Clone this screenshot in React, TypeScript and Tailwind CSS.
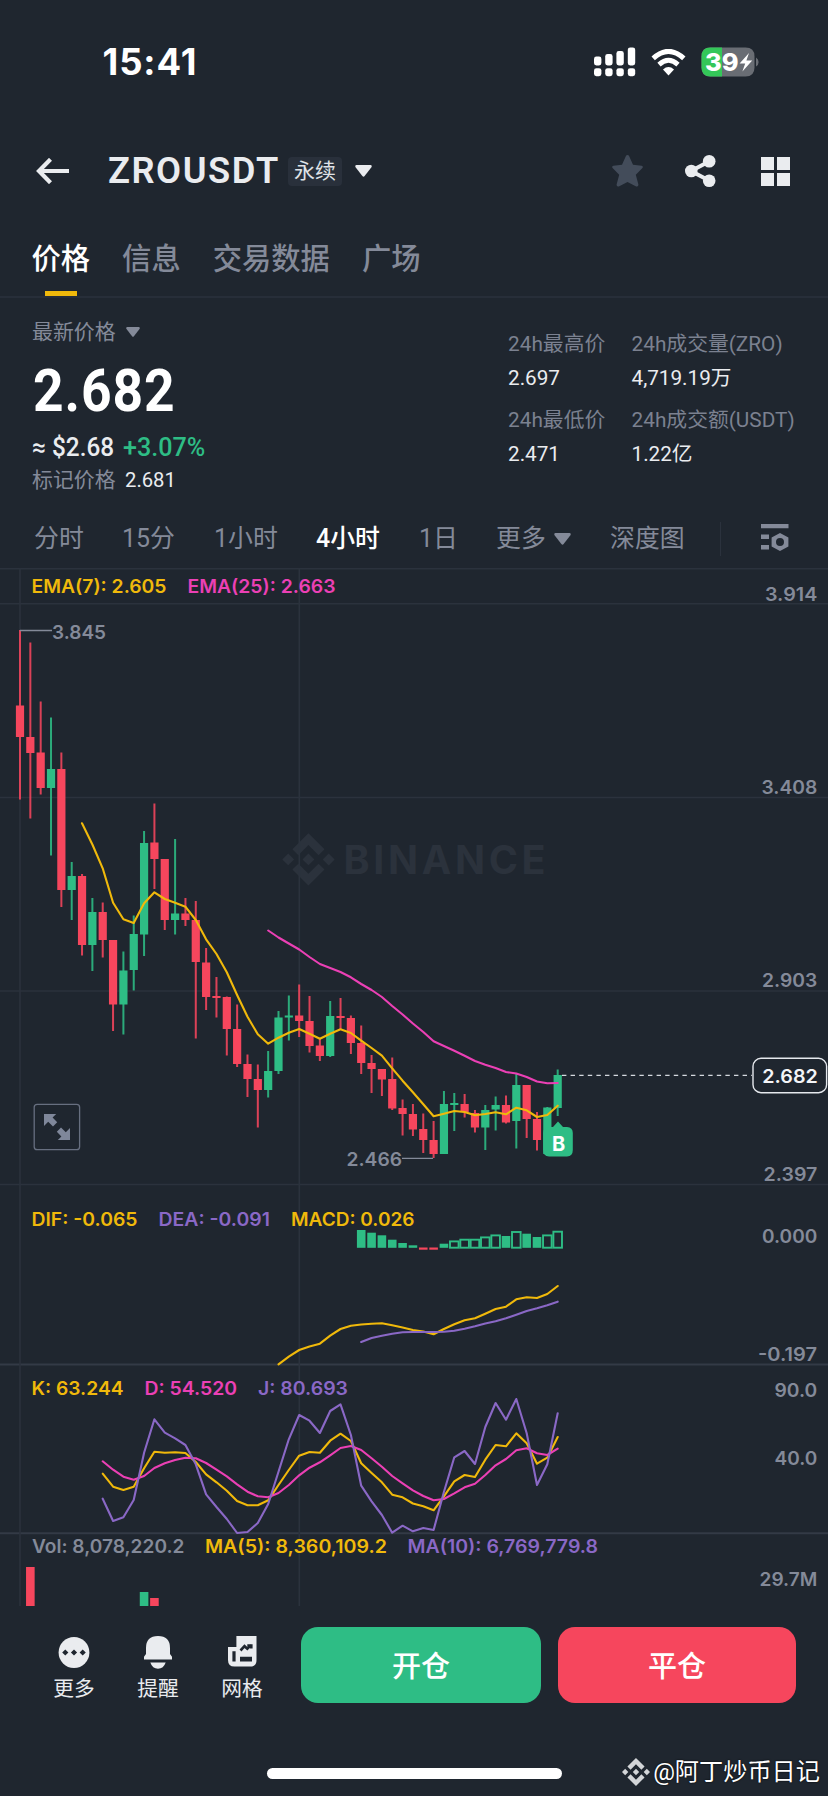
import React from "react";

const GREEN = "#2ebd85";
const RED = "#f6465d";
const YELLOW = "#f0b90b";
const PINK = "#eb40b5";
const PURPLE = "#8a68c6";
const GRAY = "#848a99";
const GRID = "#2b323d";

const BINANCE =
  "M16.624 13.9202l2.7175 2.7154-7.353 7.353-7.353-7.352 2.7175-2.7164 4.6355 4.6595 4.6356-4.6595zm4.6366-4.6366L24 12l-2.7154 2.7164L18.5682 12l2.6924-2.7164zm-9.272.001l2.7163 2.6914-2.7164 2.7174v-.001L9.2721 12l2.7164-2.7154zm-9.2722-.001L5.4088 12l-2.6914 2.6924L0 12l2.7164-2.7164zM11.9885.0115l7.353 7.329-2.7174 2.7154-4.6356-4.6356-4.6355 4.6595-2.7174-2.7154 7.353-7.353z";

const xAt = (i: number) => 20 + 10.34 * i;

type Candle = [up: 0 | 1, high: number, low: number, top: number, bottom: number];

const candles: Candle[] = [
  [0, 630, 799.5, 705.5, 737],
  [0, 642.5, 818.5, 737, 753],
  [0, 701.5, 794.5, 752.5, 788],
  [1, 717.5, 855.5, 769, 788],
  [0, 752.5, 907, 769, 890],
  [1, 862, 920, 876, 890],
  [0, 874, 955.5, 876, 945],
  [1, 898, 971, 912, 945],
  [0, 902.5, 957.5, 912, 940],
  [0, 940, 1031, 940, 1004.5],
  [1, 951.5, 1034.5, 970.5, 1004.5],
  [1, 915.5, 990.5, 934, 970],
  [1, 831, 956, 843, 934.5],
  [0, 803.5, 889, 842.5, 859],
  [0, 859, 930, 859, 920],
  [1, 839, 934.5, 913.5, 920],
  [0, 898, 926, 913.5, 920],
  [0, 901, 1038.5, 920, 962],
  [0, 948, 1010, 962.5, 997],
  [0, 977, 1017.5, 996, 998],
  [0, 996.5, 1055.5, 997, 1029],
  [0, 1004.5, 1067, 1029, 1064],
  [0, 1054.5, 1097, 1064, 1079],
  [0, 1064.5, 1127.5, 1079, 1090],
  [1, 1051, 1097.5, 1071, 1090],
  [1, 1011, 1074, 1017.5, 1071],
  [1, 995.5, 1040.5, 1015.5, 1017.5],
  [0, 984.5, 1037, 1015.5, 1021],
  [0, 996, 1052.5, 1021, 1046],
  [0, 1039, 1061, 1045.5, 1056],
  [1, 1001, 1057, 1016, 1056],
  [0, 998, 1029, 1016, 1018],
  [0, 1015.5, 1054, 1018, 1043],
  [0, 1025.5, 1074, 1043, 1063],
  [0, 1055, 1093, 1063, 1069],
  [0, 1069, 1096, 1069, 1079.5],
  [0, 1057.5, 1110, 1079, 1108.5],
  [0, 1099.5, 1135.5, 1108, 1114],
  [0, 1104, 1136, 1114, 1129.5],
  [0, 1113.5, 1153, 1129, 1140],
  [0, 1121, 1158, 1140, 1154],
  [1, 1091, 1154, 1104, 1154],
  [1, 1093, 1131, 1103, 1105],
  [0, 1094, 1117.5, 1104, 1112],
  [0, 1110, 1132.5, 1113, 1127.5],
  [1, 1105, 1150, 1110, 1127.5],
  [1, 1096.5, 1130.5, 1105, 1109.5],
  [0, 1095.5, 1123.5, 1105, 1122.5],
  [1, 1073.5, 1148.5, 1085, 1121],
  [0, 1085, 1138, 1085, 1119],
  [0, 1112, 1150.5, 1119, 1140],
  [1, 1107, 1156, 1107.5, 1154],
  [1, 1069.5, 1116, 1075, 1108],
];

const ema7 = [
  823.3, 844.5, 868.3, 902.7, 919.3, 923, 903.3, 892.3, 899, 902.7, 906.7, 920, 939.3, 954, 972.3, 995, 1016.7,
  1034.3, 1043.7, 1037.7, 1032.7, 1029, 1033.7, 1038.7, 1033.7, 1029.3, 1033, 1040.7, 1048, 1055.7, 1068.3,
  1080.7, 1092.3, 1104.3, 1116.3, 1113.7, 1111, 1112, 1115.3, 1114, 1112.3, 1114.3, 1107.7, 1110.3, 1117, 1115,
  1105.7,
];
const ema25 = [
  930.5, 937.5, 943.5, 949.5, 957, 964, 968, 972, 977.3, 984, 990, 997, 1006, 1014.5, 1023.5, 1032, 1041.3, 1046,
  1050.7, 1055.7, 1061, 1064.7, 1068, 1072, 1073.5, 1077, 1081.5, 1083.3, 1083,
];
const dif = [
  1364.3, 1356.7, 1350, 1346.5, 1343.7, 1335.7, 1329, 1325.7, 1324.5, 1323.7, 1323.3, 1325.3, 1327.5, 1330,
  1331.5, 1334.3, 1329, 1324.3, 1320.3, 1318.3, 1313.7, 1309, 1306.7, 1299.3, 1297.3, 1298, 1294, 1286,
];
const dea = [
  1342, 1338, 1335.7, 1333.7, 1332.3, 1332, 1332, 1332, 1331.7, 1330.7, 1328.7, 1326.3, 1323.5, 1321.3, 1318.3,
  1314.7, 1311, 1308.3, 1305.3, 1301.7,
];
const kLine = [
  1473.7, 1486.7, 1490, 1486.7, 1468.3, 1451.7, 1452.7, 1452.3, 1453, 1462, 1474.3, 1482.3, 1490.7, 1501, 1505.3,
  1505.3, 1500.3, 1485, 1470, 1455.7, 1452, 1452.7, 1440.7, 1433.7, 1441, 1463.3, 1473, 1482.3, 1494.7, 1497.3,
  1503.5, 1506.3, 1510.3, 1496.3, 1481.3, 1475, 1477, 1459.7, 1445, 1446.3, 1433.3, 1443.3, 1463.7, 1457.7, 1437,
];
const dLine = [
  1461.3, 1469.7, 1476.7, 1479.7, 1476, 1468, 1463.3, 1460, 1457.7, 1458.3, 1463, 1469.7, 1476.3, 1484.3, 1491.7,
  1496.3, 1497.3, 1493, 1485, 1475.3, 1467.7, 1462.3, 1455.3, 1448, 1446, 1450, 1458.3, 1466.7, 1476, 1483.3,
  1490.3, 1496, 1500.3, 1499, 1493.3, 1487.3, 1483.7, 1475, 1465.3, 1459, 1450.3, 1448.3, 1453.3, 1455, 1448.7,
];
const jLine = [
  1498.7, 1521, 1517.3, 1500, 1452.7, 1419.3, 1432.7, 1438.3, 1445, 1464.3, 1494.3, 1507, 1519, 1533, 1532, 1523,
  1504, 1471.7, 1439.3, 1415, 1420.7, 1433, 1411, 1404.3, 1435, 1485.7, 1501.3, 1515, 1532.7, 1525.7, 1531.3,
  1528, 1530, 1492, 1457.3, 1451, 1464, 1427, 1403, 1419.7, 1399, 1433.3, 1485, 1464.3, 1413.3,
];

type Bar = [top: number, kind: "solid" | "hollow" | "neg"];
const macd: Bar[] = [
  [1230, "solid"], [1232.7, "solid"], [1235.3, "solid"], [1239.7, "solid"], [1243, "solid"], [1245.3, "solid"],
  [1247.5, "neg"], [1247.5, "neg"],
  [1243.7, "solid"], [1240.7, "hollow"], [1239, "hollow"], [1239, "hollow"], [1236.7, "hollow"],
  [1234.7, "hollow"], [1236, "solid"], [1231.3, "hollow"], [1233.7, "solid"], [1237, "solid"],
  [1234.7, "hollow"], [1231, "hollow"],
];

function Line({ start, ys, color }: { start: number; ys: number[]; color: string }) {
  const pts = ys.map((y, k) => `${xAt(start + k).toFixed(1)},${y}`).join(" ");
  return <polyline points={pts} fill="none" stroke={color} strokeWidth={2.1} strokeLinejoin="round" strokeLinecap="round" />;
}

function Label({ x1, x2, y, color = GRAY, children, weight = 560 }: {
  x1: number; x2: number; y: number; color?: string; children: string; weight?: number;
}) {
  return (
    <text x={x1} y={y + 0.4} fill={color} fontSize={18.6} fontWeight={weight} textLength={x2 - x1} lengthAdjust="spacingAndGlyphs">
      {children}
    </text>
  );
}

function Chart() {
  return (
    <svg className="block h-[1040px] w-[828px] shrink-0 font-['Inter',sans-serif]" viewBox="0 568 828 1040">
      <g fill="#2b323c">
        <g transform="translate(282.3 833.3) scale(2.18)"><path d={BINANCE} /></g>
        <text x={343.5} y={873.9} fontSize={39.5} fontWeight={700} textLength={202} lengthAdjust="spacing">BINANCE</text>
      </g>
      <g stroke={GRID} strokeWidth={1.6}>
        {[568.8, 603.7, 797.5, 991, 1184.5].map((y) => <line key={y} x1={0} x2={828} y1={y} y2={y} />)}
        {[1364.5, 1533.3].map((y) => <line key={y} x1={0} x2={828} y1={y} y2={y} stroke="#333a46" strokeWidth={2} />)}
        <line x1={20} x2={20} y1={568} y2={1606} />
        <line x1={299.3} x2={299.3} y1={568} y2={1606} />
      </g>

      <line x1={562} x2={752} y1={1075.4} y2={1075.4} stroke="#d5d9df" strokeWidth={1.2} strokeDasharray="4.4 4.2" />

      {candles.map(([up, high, low, top, bottom], i) => {
        const c = up ? GREEN : RED;
        return (
          <g key={i} fill={c}>
            <rect x={xAt(i) - 1} y={high} width={2} height={low - high} opacity={0.88} />
            <rect x={xAt(i) - 4.1} y={top} width={8.2} height={bottom - top} />
          </g>
        );
      })}
      <Line start={24} ys={ema25} color={PINK} />
      <Line start={6} ys={ema7} color={YELLOW} />

      <path d="M553 1127 L558 1121.5 L563 1127 H567 Q572.8 1127.5 572.8 1133 V1150 Q572.8 1156.4 567 1156.4 H549 Q543.2 1156.4 543.2 1150 V1133 Q543.2 1127 549 1127 Z" fill={GREEN} />
      <text x={552} y={1150.6} fontSize={20} fontWeight={700} fill="#fff">B</text>

      <path d="M20 630.5H52M402 1158.3H433" stroke={GRAY} strokeWidth={1.3} />
      <Label x1={52} x2={106} y={638.4}>3.845</Label>
      <Label x1={346.5} x2={402} y={1166}>2.466</Label>

      <Label x1={31.5} x2={166.5} y={592.3} color={YELLOW}>EMA(7): 2.605</Label>
      <Label x1={187.5} x2={335.5} y={592.3} color={PINK}>EMA(25): 2.663</Label>
      <Label x1={31.5} x2={137.5} y={1225.6} color={YELLOW}>DIF: -0.065</Label>
      <Label x1={158.5} x2={270} y={1225.6} color={PURPLE}>DEA: -0.091</Label>
      <Label x1={291} x2={414.5} y={1225.6} color={YELLOW}>MACD: 0.026</Label>
      <Label x1={31.5} x2={123.5} y={1394.3} color={YELLOW}>K: 63.244</Label>
      <Label x1={144.5} x2={237} y={1394.3} color={PINK}>D: 54.520</Label>
      <Label x1={258} x2={348} y={1394.3} color={PURPLE}>J: 80.693</Label>
      <Label x1={32} x2={184.5} y={1552.3}>Vol: 8,078,220.2</Label>
      <Label x1={205} x2={387} y={1552.3} color={YELLOW}>MA(5): 8,360,109.2</Label>
      <Label x1={407.5} x2={598} y={1552.3} color={PURPLE}>MA(10): 6,769,779.8</Label>

      <Label x1={765} x2={817.3} y={600.4}>3.914</Label>
      <Label x1={761.5} x2={817.3} y={793.5}>3.408</Label>
      <Label x1={762} x2={817.3} y={987}>2.903</Label>
      <Label x1={763.5} x2={817.3} y={1180.3}>2.397</Label>
      <Label x1={762} x2={817.3} y={1243}>0.000</Label>
      <Label x1={758} x2={817} y={1360.5}>-0.197</Label>
      <Label x1={774.5} x2={817.3} y={1396.3}>90.0</Label>
      <Label x1={774.5} x2={817.3} y={1464.3}>40.0</Label>
      <Label x1={759.5} x2={817.3} y={1586}>29.7M</Label>

      <rect x={753} y={1058.3} width={73.6} height={34.4} rx={8} fill="#1f262f" stroke="#e6e9ee" strokeWidth={1.4} />
      <Label x1={762.3} x2={817.8} y={1082.8} color="#f4f5f7" weight={620}>2.682</Label>

      {macd.map(([top, kind], k) => {
        const x = xAt(33 + k);
        if (kind === "neg") return <rect key={k} x={x - 4.3} y={top} width={8.6} height={2.2} fill={RED} />;
        if (kind === "solid") return <rect key={k} x={x - 4.3} y={top} width={8.6} height={1247.8 - top} fill={GREEN} />;
        return <rect key={k} x={x - 4.3} y={top + 0.7} width={8.6} height={1247 - top} fill="none" stroke={GREEN} strokeWidth={1.9} />;
      })}
      <Line start={25} ys={dif} color={YELLOW} />
      <Line start={33} ys={dea} color={PURPLE} />
      <Line start={8} ys={kLine} color={YELLOW} />
      <Line start={8} ys={dLine} color={PINK} />
      <Line start={8} ys={jLine} color={PURPLE} />

      <rect x={xAt(1) - 4.3} y={1567} width={8.6} height={39} fill={RED} />
      <rect x={xAt(12) - 4.3} y={1592} width={8.6} height={14} fill={GREEN} />
      <rect x={xAt(13) - 4.3} y={1598} width={8.6} height={8} fill={RED} />

      <rect x={34.2} y={1104.3} width={45.4} height={45.4} rx={3} fill="#1f262f" stroke="#676f80" strokeWidth={1.3} />
      <g fill="#7f879a">
        <path d="M44 1114H56.2L52.6 1117.6L57.2 1122.2L53 1126.4L48.2 1121.8L44 1126Z" />
        <path d="M70 1140H57.8L61.4 1136.4L56.8 1131.8L61 1127.6L65.8 1132.2L70 1128Z" />
      </g>
    </svg>
  );
}

function Caret({ className }: { className: string }) {
  return (
    <svg className={className} viewBox="0 0 18 12" preserveAspectRatio="none" fill="currentColor">
      <path d="M1.5 0H16.5Q18 0 17.6 2L10.2 11Q9 12.4 7.8 11L0.4 2Q0 0 1.5 0Z" />
    </svg>
  );
}

function StatusBar() {
  return (
    <div className="flex h-[124px] items-center justify-between pr-[69px] pl-[102.500px] text-white">
      <span className="font-['Inter',sans-serif] text-[36.500px] leading-none font-bold tracking-[0.9px]">15:41</span>
      <div className="flex items-center">
        <svg className="h-[30px] w-[42px]" viewBox="0 0 42 30" fill="#fff">
          <rect x="0" y="9.5" width="7.4" height="9" rx="2.4" />
          <rect x="11.2" y="7" width="7.4" height="11.5" rx="2.4" />
          <rect x="22.4" y="4" width="7.4" height="14.5" rx="2.4" />
          <rect x="33.8" y="0.4" width="7.4" height="18" rx="2.4" />
          <rect x="0" y="21.2" width="7.4" height="8" rx="2.4" />
          <rect x="11.2" y="21.2" width="7.4" height="8" rx="2.4" />
          <rect x="22.4" y="21.2" width="7.4" height="8" rx="2.4" />
          <rect x="33.8" y="21.2" width="7.4" height="8" rx="2.4" />
        </svg>
        <svg className="ml-[15px] h-[27px] w-[35px]" viewBox="0 0 35 27">
          <path d="M2.2 9.4Q17.5-4.6 32.8 9.4" fill="none" stroke="#fff" strokeWidth="5" />
          <path d="M8 15.6Q17.5 7 27 15.6" fill="none" stroke="#fff" strokeWidth="4.8" />
          <path d="M12 20.4Q17.5 15.6 23 20.4L17.5 26.4Z" fill="#fff" />
        </svg>
        <svg className="ml-[15px] h-[30px] w-[58px] font-['Inter',sans-serif]" viewBox="0 0 58 30">
          <path d="M9 .5H44.500Q53.500 .5 53.500 9.500V20.500Q53.500 29.500 44.500 29.500H9Q.5 29.500 .5 20.500V9.500Q.5 .5 9 .5Z" fill="#696d74" />
          <path d="M21 .5H9.500Q.5 .5 .5 9.500V20.500Q.5 29.500 9.500 29.500H21Z" fill="#34c759" />
          <path d="M55 10.500Q57.600 12 57.600 15T55 19.500Z" fill="#696d74" />
          <text x="4" y="23.600" fontSize="24" fontWeight="800" fill="#fff" textLength="33.500" lengthAdjust="spacingAndGlyphs">39</text>
          <path d="M48 6L38.600 16.600H44.200L41.400 24.600L51.200 13.400H45.400Z" fill="#fff" />
        </svg>
      </div>
    </div>
  );
}

function Header() {
  return (
    <div className="flex h-[94px] items-center pl-[36px] text-[#eaecef]">
      <svg className="h-[26px] w-[33px]" viewBox="0 0 33 26" fill="none" stroke="currentColor" strokeWidth="4.2">
        <path d="M3 13H33M14.500 1.300L3 13L14.500 24.700" />
      </svg>
      <span className="ml-[38.500px] w-[170.500px] text-[37.500px] leading-none font-semibold tracking-[1.6px] whitespace-nowrap">
        <span className="inline-block origin-left scale-x-[0.968]">ZROUSDT</span>
      </span>
      <span className="ml-[10px] flex h-[29px] w-[54px] items-center justify-center rounded bg-[#29303b] text-[21px] leading-none text-[#dfe2e7]">永续</span>
      <Caret className="ml-[12.500px] h-[12px] w-[17px]" />
      <svg className="ml-[240.500px] h-[32px] w-[31px] text-[#434c5a]" viewBox="0 0 31 32" fill="currentColor">
        <path d="M15.500 0Q16.600 0 17.200 1.200L21 9.800L29.600 10.800Q31.800 11.400 30.200 13.200L23.800 19.800L26.400 29.600Q26.500 32 24.200 31.400L15.500 27L6.800 31.400Q4.500 32 4.600 29.600L7.200 19.800L.8 13.200Q-.8 11.400 1.400 10.800L10 9.800L13.800 1.200Q14.400 0 15.500 0Z" />
      </svg>
      <svg className="ml-[42px] h-[32px] w-[31px]" viewBox="0 0 31 32" fill="currentColor">
        <path d="M6 16L24 6.500M6 16L24 25.500" stroke="currentColor" strokeWidth="4" />
        <circle cx="6.300" cy="16" r="6.300" />
        <circle cx="24.200" cy="6.300" r="6.300" />
        <circle cx="24.200" cy="25.700" r="6.300" />
      </svg>
      <div className="ml-[45px] grid grid-cols-2 gap-[3px]">
        <i className="size-[13px] bg-current" />
        <i className="size-[13px] bg-current" />
        <i className="size-[13px] bg-current" />
        <i className="size-[13px] bg-current" />
      </div>
    </div>
  );
}

function Tabs() {
  return (
    <nav className="flex h-[80px] gap-[32px] border-b-2 border-[#272e39] pt-[21px] pl-[31.500px] text-[29.300px] leading-[40px] font-medium text-[#848a99]">
      <div className="flex flex-col items-center text-white">
        价格
        <span className="mt-[12px] h-[6px] w-[32px] bg-[#f0b90b]" />
      </div>
      <div>信息</div>
      <div>交易数据</div>
      <div>广场</div>
    </nav>
  );
}

function Stat({ label, value }: { label: string; value: string }) {
  return (
    <div className="h-[76px]">
      <div className="h-[34px] text-[20.800px] leading-[34px] text-[#7b8190]">{label}</div>
      <div className="h-[34px] text-[20.700px] leading-[34px] text-[#eaecef]">{value}</div>
    </div>
  );
}

function PricePanel() {
  return (
    <section className="flex h-[210px] whitespace-nowrap">
      <div className="w-[508px] pl-[32px]">
        <div className="flex h-[32px] items-center pt-[34px] text-[20.900px] leading-none text-[#848a99]">
          最新价格
          <Caret className="ml-[10px] h-[10px] w-[14px]" />
        </div>
        <div className="mt-[28px] h-[62px] pl-[1px] text-[60px] leading-[62px] font-bold tracking-[1px] text-white">
          <span className="inline-block origin-left scale-x-[0.89]">2.682</span>
        </div>
        <div className="mt-[8px] flex h-[36px] items-center text-[25.500px] leading-none font-medium">
          <span className="w-[91px] text-[#eaecef]"><span className="inline-block origin-left scale-x-[0.955]">≈ $2.68</span></span>
          <span className="text-[#2ebd85]"><span className="inline-block origin-left scale-x-[0.985]">+3.07%</span></span>
        </div>
        <div className="flex h-[28px] items-center text-[20.900px] leading-none text-[#848a99]">
          标记价格
          <span className="ml-[9px] text-[#eaecef]"><span className="inline-block origin-left scale-x-[0.97]">2.681</span></span>
        </div>
      </div>
      <div className="w-[123.500px] pt-[29px]">
        <Stat label="24h最高价" value="2.697" />
        <Stat label="24h最低价" value="2.471" />
      </div>
      <div className="pt-[29px]">
        <Stat label="24h成交量(ZRO)" value="4,719.19万" />
        <Stat label="24h成交额(USDT)" value="1.22亿" />
      </div>
    </section>
  );
}

function Intervals() {
  return (
    <div className="grid h-[60px] grid-cols-[88px_92px_102px_103px_77px_114px_110px_41px_1fr] items-center pt-[3px] pl-[34px] text-[24.900px] leading-none whitespace-nowrap text-[#848a99]">
      <span>分时</span>
      <span>15分</span>
      <span>1小时</span>
      <span className="font-medium text-white">4小时</span>
      <span>1日</span>
      <span className="flex items-center">
        更多
        <Caret className="-mt-[2px] ml-[8px] h-[12px] w-[17px]" />
      </span>
      <span>深度图</span>
      <span className="-mt-[2px] h-[34px] w-[1px] bg-[#2b323d]" />
      <svg className="-mt-[5px] h-[27px] w-[28px]" viewBox="0 0 28 27" fill="currentColor">
        <path d="M0 0H27.500V4.200H0ZM0 10.500H8V15H0ZM0 21H8V25.500H0Z" />
        <path fillRule="evenodd" d="M19 9L27.400 13.500V22.500L19 27L10.600 22.500V13.500ZM19 14A4 4 0 1 0 19 22A4 4 0 1 0 19 14Z" />
      </svg>
    </div>
  );
}

function Action({ label, children }: { label: string; children: React.ReactNode }) {
  return (
    <div className="flex w-[84px] flex-col items-center pt-[9px]">
      <svg className="h-[34px] w-[32px]" viewBox="0 0 32 34" fill="#eaecef">{children}</svg>
      <span className="mt-[8px] text-[20.700px] leading-[24px] text-[#eaecef]">{label}</span>
    </div>
  );
}

function BottomBar() {
  return (
    <div className="flex h-[95px] pl-[32px]">
      <div className="flex w-[269px] pt-[18px]">
        <Action label="更多">
          <circle cx="16" cy="17.500" r="15.400" />
          <path d="M7.300 14.400L10.400 17.500L7.300 20.600L4.200 17.500ZM16 14.400L19.100 17.500L16 20.600L12.900 17.500ZM24.700 14.400L27.800 17.500L24.700 20.600L21.600 17.500Z" fill="#1f262f" />
        </Action>
        <Action label="提醒">
          <path d="M4 19V13Q4 1 16 1T28 13V19L30 21.800V24.400H2V21.800ZM8.300 27.500H23.700Q21.500 33.700 16 33.700T8.300 27.500Z" />
        </Action>
        <Action label="网格">
          <path fillRule="evenodd" d="M10.400 1H30.500V25Q30.500 31.600 24 31.600H8.500Q2 31.600 2 25V12H10.400ZM6.400 16.300V26.500H9.600V16.300ZM14 21.800V26.500H26V21.800Z" />
          <path d="M14.500 15.500L18.500 11.200L21.300 13.800L25.300 9.800M21.300 10.500H25.300V13.500" fill="none" stroke="#1f262f" strokeWidth="2.600" />
        </Action>
      </div>
      <button className="mt-[19px] h-[76px] w-[240px] rounded-[17px] bg-[#2ebd85] pt-[5px] text-[29px] font-medium text-white">开仓</button>
      <button className="mt-[19px] ml-[17px] h-[76px] w-[238px] rounded-[17px] bg-[#f6465d] pt-[5px] text-[29px] font-medium text-white">平仓</button>
    </div>
  );
}

export default function App() {
  return (
    <main className="relative flex h-[1796px] w-[828px] flex-col overflow-hidden bg-[#1f262f] font-['Roboto','Noto_Sans_CJK_SC',sans-serif]">
      <StatusBar />
      <Header />
      <Tabs />
      <PricePanel />
      <Intervals />
      <Chart />
      <BottomBar />
      <div className="mt-[65px] ml-[267px] h-[11px] w-[295px] rounded-full bg-white" />
      <div className="absolute right-[8px] bottom-[9px] flex items-center whitespace-nowrap text-white">
        <svg className="mr-[3px] size-[28px]" viewBox="0 0 24 24" fill="#d3d5d8"><path d={BINANCE} /></svg>
        <span className="text-[24.200px] leading-[30px] [text-shadow:0_0_2px_#000]">@阿丁炒币日记</span>
      </div>
    </main>
  );
}
